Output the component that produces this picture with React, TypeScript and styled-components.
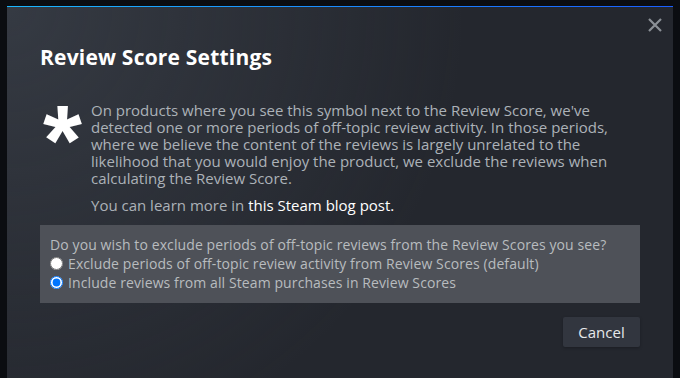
import React, { useState } from "react";
import styled, { createGlobalStyle } from "styled-components";

const Global = createGlobalStyle`
  html, body {
    margin: 0;
    padding: 0;
    background: #0b0d11;
    height: 100%;
    overflow: hidden;
  }
  #root {
    height: 100%;
  }
`;

const Page = styled.div`
  height: 100%;
  padding: 6px 7px 0 7px;
  box-sizing: border-box;
  font-family: "Open Sans", "Noto Sans", Arial, sans-serif;
`;

const Modal = styled.div`
  position: relative;
  width: 666px;
  height: 100%;
  box-sizing: border-box;
  border-top: 1px solid #1a9fff;
  border-image: linear-gradient(to right, #1ab8ff, #1a5fff) 1;
  background:
    radial-gradient(circle at top left, rgba(74, 81, 92, 0.45) 0%, rgba(75, 81, 92, 0) 60%),
    #24272e;
  padding: 37px 33px 0 33px;
  display: flex;
  flex-direction: column;
`;

const Close = styled.button`
  position: absolute;
  top: 10px;
  right: 10px;
  width: 16px;
  height: 16px;
  padding: 0;
  border: none;
  background: none;
  cursor: pointer;
  display: flex;
`;

const Title = styled.h1`
  margin: 0;
  font-size: 21px;
  letter-spacing: 0.2px;
  font-weight: 700;
  color: #ffffff;
  line-height: 26px;
`;

const InfoRow = styled.div`
  display: flex;
  margin-top: 32px;
`;

const Asterisk = styled.div`
  width: 51px;
  flex: none;
  font-family: "Liberation Sans", Arial, sans-serif;
  font-size: 100px;
  font-weight: 700;
  line-height: 76px;
  height: 50px;
  color: #ffffff;
  padding-left: 3px;
  box-sizing: border-box;
`;

const Text = styled.div`
  width: 545px;
  color: #acb2b8;
  font-size: 15px;
  line-height: 17px;
`;

const Para = styled.p`
  margin: 0 0 10px 0;
`;

const BlogLink = styled.a`
  color: #ffffff;
  text-decoration: none;
`;

const Choices = styled.div`
  margin-top: 1px;
  background: #4e5158;
  padding: 10px 10px 11px 10px;
  color: #b8bcbf;
  font-size: 14px;
  letter-spacing: 0.1px;
  line-height: 19px;
`;

const Option = styled.label`
  display: flex;
  align-items: center;
  gap: 4px;
`;

const Radio = styled.input`
  margin: 0 1px 0 0;
  width: 13px;
  height: 13px;
`;

const Footer = styled.div`
  display: flex;
  justify-content: flex-end;
  margin-top: 14px;
`;

const Button = styled.button`
  width: 77px;
  height: 30px;
  border: none;
  border-radius: 2px;
  background: #32363f;
  color: #e6e8ea;
  font-family: "Open Sans", "Noto Sans", Arial, sans-serif;
  font-size: 15px;
  cursor: pointer;
  box-shadow: 0 1px 3px rgba(0, 0, 0, 0.25);
`;

export default function App() {
  const [choice, setChoice] = useState("include");
  return (
    <>
      <Global />
      <Page>
        <Modal>
          <Close aria-label="Close">
            <svg width="16" height="16" viewBox="0 0 16 16">
              <path d="M2 2 L14 14 M14 2 L2 14" stroke="#8b9096" strokeWidth="2.2" strokeLinecap="butt" />
            </svg>
          </Close>
          <Title>Review Score Settings</Title>
          <InfoRow>
            <Asterisk>*</Asterisk>
            <Text>
              <Para>
                On products where you see this symbol next to the Review Score, we've detected one or more
                periods of off-topic review activity. In those periods, where we believe the content of the
                reviews is largely unrelated to the likelihood that you would enjoy the product, we exclude
                the reviews when calculating the Review Score.
              </Para>
              <Para>
                You can learn more in <BlogLink href="#">this Steam blog post.</BlogLink>
              </Para>
            </Text>
          </InfoRow>
          <Choices>
            <div>Do you wish to exclude periods of off-topic reviews from the Review Scores you see?</div>
            <Option>
              <Radio
                type="radio"
                name="rs"
                checked={choice === "exclude"}
                onChange={() => setChoice("exclude")}
              />
              Exclude periods of off-topic review activity from Review Scores (default)
            </Option>
            <Option>
              <Radio
                type="radio"
                name="rs"
                checked={choice === "include"}
                onChange={() => setChoice("include")}
              />
              Include reviews from all Steam purchases in Review Scores
            </Option>
          </Choices>
          <Footer>
            <Button>Cancel</Button>
          </Footer>
        </Modal>
      </Page>
    </>
  );
}
